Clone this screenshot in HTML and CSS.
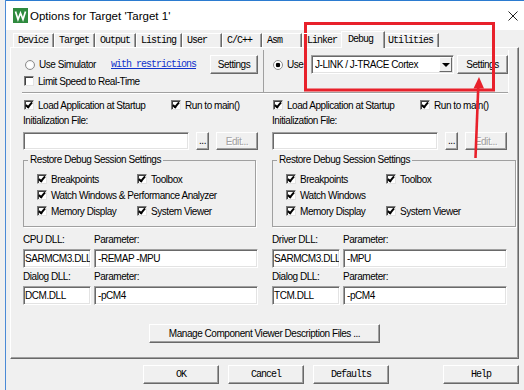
FILE: index.html
```html
<!DOCTYPE html>
<html lang="en">
<head>
  <meta charset="UTF-8" />
  <title>Options for Target 'Target 1'</title>
  <link rel="stylesheet" href="styles.css">
</head>
<body>
<div class="window">

  <div class="titlebar">
    <svg class="app-icon" width="15" height="15" viewBox="0 0 15 15">
      <rect width="15" height="15" fill="#2e8a3e"/>
      <path d="M2.5 3.5 L5 11.5 L7.5 5 L10 11.5 L12.5 3.5" fill="none" stroke="#fff" stroke-width="1.7"/>
    </svg>
    <span class="title">Options for Target 'Target 1'</span>
    <svg class="close" width="10" height="10" viewBox="0 0 10 10">
      <path d="M0.5 0.5 L9.5 9.5 M9.5 0.5 L0.5 9.5" stroke="#222" stroke-width="1"/>
    </svg>
  </div>

  <div class="tabs">
    <span class="tab">Device</span>
    <span class="tab">Target</span>
    <span class="tab">Output</span>
    <span class="tab">Listing</span>
    <span class="tab">User</span>
    <span class="tab">C/C++</span>
    <span class="tab">Asm</span>
    <span class="tab">Linker</span>
    <span class="tab active">Debug</span>
    <span class="tab">Utilities</span>
  </div>

  <div class="panel">
    <div class="top">
      <div class="top-left">
        <div class="sim-row">
          <label class="opt"><span class="radio sim"></span>Use Simulator</label>
          <a class="link">with restrictions</a>
          <button class="btn">Settings</button>
        </div>
        <label class="opt"><span class="check"></span>Limit Speed to Real-Time</label>
      </div>
      <div class="top-right">
        <div class="use-row">
          <label class="opt"><span class="radio on"></span>Use:</label>
          <div class="combo">
            <span class="combo-text">J-LINK / J-TRACE Cortex</span>
            <span class="combo-btn"></span>
          </div>
          <button class="btn">Settings</button>
        </div>
      </div>
    </div>

    <div class="main">
      <div class="col">
        <div class="pair">
          <label class="opt"><span class="check on"></span>Load Application at Startup</label>
          <label class="opt"><span class="check on"></span>Run to main()</label>
        </div>
        <div class="caption init">Initialization File:</div>
        <div class="file-row">
          <span class="field"></span>
          <button class="btn dots">...</button>
          <button class="btn" disabled>Edit...</button>
        </div>
        <fieldset class="group">
          <legend>Restore Debug Session Settings</legend>
          <div class="group-grid">
            <label class="opt"><span class="check on"></span>Breakpoints</label>
            <label class="opt"><span class="check on"></span>Toolbox</label>
            <label class="opt wide"><span class="check on"></span>Watch Windows &amp; Performance Analyzer</label>
            <label class="opt"><span class="check on"></span>Memory Display</label>
            <label class="opt"><span class="check on"></span>System Viewer</label>
          </div>
        </fieldset>
        <div class="dll">
          <span class="caption">CPU DLL:</span>
          <span class="caption">Parameter:</span>
          <span class="field">SARMCM3.DLL</span>
          <span class="field param">-REMAP -MPU</span>
          <span class="caption">Dialog DLL:</span>
          <span class="caption">Parameter:</span>
          <span class="field">DCM.DLL</span>
          <span class="field param">-pCM4</span>
        </div>
      </div>

      <div class="col right">
        <div class="pair">
          <label class="opt"><span class="check on"></span>Load Application at Startup</label>
          <label class="opt"><span class="check on"></span>Run to main()</label>
        </div>
        <div class="caption init">Initialization File:</div>
        <div class="file-row">
          <span class="field"></span>
          <button class="btn dots">...</button>
          <button class="btn" disabled>Edit...</button>
        </div>
        <fieldset class="group">
          <legend>Restore Debug Session Settings</legend>
          <div class="group-grid">
            <label class="opt"><span class="check on"></span>Breakpoints</label>
            <label class="opt"><span class="check on"></span>Toolbox</label>
            <label class="opt wide"><span class="check on"></span>Watch Windows</label>
            <label class="opt"><span class="check on"></span>Memory Display</label>
            <label class="opt"><span class="check on"></span>System Viewer</label>
          </div>
        </fieldset>
        <div class="dll">
          <span class="caption">Driver DLL:</span>
          <span class="caption">Parameter:</span>
          <span class="field">SARMCM3.DLL</span>
          <span class="field param">-MPU</span>
          <span class="caption">Dialog DLL:</span>
          <span class="caption">Parameter:</span>
          <span class="field">TCM.DLL</span>
          <span class="field param">-pCM4</span>
        </div>
      </div>
    </div>

    <div class="manage-row">
      <button class="btn manage">Manage Component Viewer Description Files ...</button>
    </div>
  </div>

  <div class="footer">
    <button class="btn mono">OK</button>
    <button class="btn mono">Cancel</button>
    <button class="btn mono">Defaults</button>
    <button class="btn mono help">Help</button>
  </div>

</div>

  <!-- red callout drawn over the dialog -->
  <svg class="callout" width="524" height="390" viewBox="0 0 524 390">
    <rect x="305.5" y="23.5" width="188" height="66.5" fill="none" stroke="#e8212b" stroke-width="3"/>
    <path d="M475.5 158 L478.3 86" stroke="#e8212b" stroke-width="2.6"/>
    <polygon points="479,77 473.5,88.5 484,88.5" fill="#e8212b"/>
  </svg>

</body>
</html>
```

FILE: styles.css
```css
body {
  margin: 0;
  width: 524px;
  height: 390px;
  position: relative;
  overflow: hidden;
  background-color: #f0f0f0;
  font-family: "Liberation Sans", Arial, sans-serif;
  font-size: 10px;
  letter-spacing: -0.45px;
  color: #000;
}

.window {
  margin-left: 5px;
  height: 390px;
  border-left: 1px solid #4a8ad6;
}

.titlebar {
  height: 29px;
  border-top: 1px solid #2b7bd0;
  background: #fff;
  display: flex;
  align-items: center;
  padding-left: 7px;
}

.app-icon {
  margin-right: 2px;
}

.title {
  flex: 1;
  font-size: 11.5px;
  letter-spacing: 0;
}

.close {
  margin-right: 6px;
}

/* tab strip */
.tabs {
  display: flex;
  align-items: flex-end;
  height: 17px;
  margin-left: 7px;
  position: relative;
  z-index: 1;
}

.tab {
  box-sizing: border-box;
  height: 14px;
  min-width: 40px;
  padding: 0 5px 0 4px;
  border-top: 1px solid #fff;
  border-left: 1px solid #fff;
  border-right: 1px solid #696969;
  box-shadow: inset -1px 0 #a0a0a0;
  font-family: "Liberation Mono", monospace;
  font-size: 10px;
  letter-spacing: -1px;
  line-height: 13px;
  white-space: nowrap;
}

.tab.active {
  height: 17px;
  min-width: 44px;
  margin: 0 -2px -1px;
  padding: 0 5px 0 6px;
  background: #f0f0f0;
  line-height: 15px;
  position: relative;
}

/* tab page */
.panel {
  box-sizing: border-box;
  width: 509px;
  margin-left: 4px;
  border: 1px solid;
  border-color: #fff #696969 #696969 #fff;
  box-shadow: inset -1px -1px #a0a0a0;
  padding-bottom: 15px;
}

.top {
  display: grid;
  grid-template-columns: 235px 1fr;
  margin: 0 10px 0 11px;
  padding: 7px 0 4px 1px;
  border-bottom: 1px solid #a0a0a0;
  box-shadow: 0 1px #fff;
}

.top-right {
  margin: -5px 0 -4px 5px;
  padding: 5px 0 0 8px;
  border-left: 1px solid #a0a0a0;
  box-shadow: 1px 0 #fff;
}

.sim-row {
  display: grid;
  grid-template-columns: 88px 1fr 48px;
  align-items: center;
  height: 19px;
}

.use-row {
  display: grid;
  grid-template-columns: 36px 143px 1fr;
  column-gap: 3px;
  align-items: center;
  height: 19px;
}

.link {
  font-family: "Liberation Mono", monospace;
  font-size: 10px;
  letter-spacing: -1px;
  color: #1133cc;
  text-decoration: underline;
}

.opt {
  display: flex;
  align-items: center;
  gap: 4px;
  height: 14px;
  white-space: nowrap;
}

.check {
  box-sizing: border-box;
  flex: none;
  position: relative;
  width: 10px;
  height: 10px;
  margin-left: 1px;
  background: #fff;
  border: 1px solid;
  border-color: #7a7a7a #e3e3e3 #e3e3e3 #7a7a7a;
  box-shadow: inset 1px 1px #404040;
}

.check.on::after {
  content: "";
  position: absolute;
  left: 2px;
  top: 0;
  width: 2px;
  height: 5px;
  border: solid #000;
  border-width: 0 2px 2px 0;
  transform: rotate(40deg);
}

.radio {
  box-sizing: border-box;
  flex: none;
  width: 10px;
  height: 10px;
  margin-left: 1px;
  border-radius: 50%;
  border: 1px solid #8c8c8c;
  background: radial-gradient(circle, #fff 40%, #e4e4e4);
}

.radio.sim {
  margin-left: 2px;
}

.radio.on {
  background: radial-gradient(circle, #000 2px, #fff 2.6px);
}

.combo {
  box-sizing: border-box;
  display: flex;
  align-items: center;
  height: 19px;
  background: #fff;
  border: 1px solid;
  border-color: #a0a0a0 #fff #fff #a0a0a0;
  box-shadow: inset 1px 1px #696969, inset -1px -1px #e3e3e3;
  padding: 2px 1px 2px 3px;
}

.combo-text {
  flex: 1;
  white-space: nowrap;
  overflow: hidden;
}

.combo-btn {
  box-sizing: border-box;
  width: 13px;
  height: 15px;
  background: #f0f0f0;
  border: 1px solid;
  border-color: #fff #696969 #696969 #fff;
  display: flex;
  align-items: center;
  justify-content: center;
}

.combo-btn::after {
  content: "";
  border: 4px solid transparent;
  border-top: 4px solid #000;
  border-bottom: 0;
  margin-top: 1px;
}

.btn {
  box-sizing: border-box;
  height: 19px;
  padding: 0;
  font: inherit;
  letter-spacing: inherit;
  color: #000;
  background: #f0f0f0;
  border: 1px solid;
  border-color: #fff #696969 #696969 #fff;
  box-shadow: inset -1px -1px #a0a0a0;
  white-space: nowrap;
}

.btn:disabled {
  color: #a0a0a0;
  text-shadow: 1px 1px #fff;
}

.btn.dots {
  line-height: 10px;
}

/* two halves of the page */
.main {
  display: grid;
  grid-template-columns: 235px 235px;
  column-gap: 14px;
  margin-left: 12px;
}

.col {
  display: flex;
  flex-direction: column;
}

.pair {
  display: grid;
  grid-template-columns: 147px 1fr;
  margin-top: 5px;
}

.caption {
  height: 14px;
  line-height: 14px;
  white-space: nowrap;
}

.init {
  margin-top: 2px;
}

.file-row {
  display: grid;
  grid-template-columns: 1fr 13px 42px;
  column-gap: 7px;
  height: 18px;
  margin-top: 4px;
}

.file-row .btn {
  height: 18px;
}

.field {
  box-sizing: border-box;
  height: 19px;
  line-height: 17px;
  padding-left: 1px;
  overflow: hidden;
  white-space: nowrap;
  background: #fff;
  border: 1px solid;
  border-color: #a0a0a0 #fff #fff #a0a0a0;
  box-shadow: inset 1px 1px #696969, inset -1px -1px #e3e3e3;
}

.field.param {
  padding-left: 3px;
}

.file-row .field {
  height: 18px;
}

.group {
  min-width: 0;
  margin: 3px 2px 0 0;
  padding: 4px 6px 7px 12px;
  border: 1px solid #a0a0a0;
  box-shadow: 1px 1px #fff;
}

.right .group {
  margin-right: -9px;
}

.group legend {
  margin-left: -8px;
  padding: 0 2px;
  line-height: 14px;
}

.group-grid {
  display: grid;
  grid-template-columns: 100px 1fr;
  grid-auto-rows: 16px;
  align-items: center;
}

.group-grid .wide {
  grid-column: 1 / -1;
}

.dll {
  display: grid;
  grid-template-columns: 68px 1fr;
  grid-template-rows: 14px 19px 14px 19px;
  gap: 2px 3px;
  margin-top: 6px;
}

.manage-row {
  display: flex;
  justify-content: center;
  margin-top: 19px;
}

.btn.manage {
  width: 231px;
}

.footer {
  display: flex;
  gap: 9px;
  margin-top: 6px;
  padding: 0 5px 0 137px;
}

.footer .btn {
  width: 76px;
}

.btn.mono,
.mono {
  font-family: "Liberation Mono", monospace;
  font-size: 10px;
  letter-spacing: -1px;
}

.help {
  margin-left: auto;
}

.callout {
  position: absolute;
  left: 0;
  top: 0;
  pointer-events: none;
}
```
